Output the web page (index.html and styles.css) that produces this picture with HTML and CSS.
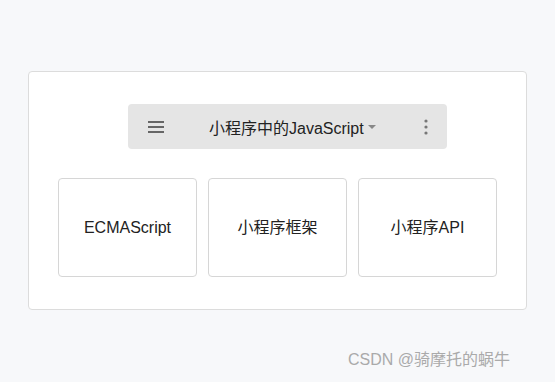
FILE: index.html
```html
<!DOCTYPE html>
<html lang="zh">
<head>
  <meta charset="UTF-8" />
  <meta name="viewport" content="width=device-width, initial-scale=1" />
  <title>小程序中的JavaScript</title>
  <link rel="stylesheet" href="styles.css">
</head>
<body>
  <div class="panel">
    <div class="toolbar">
      <span class="tb-icon">
        <svg width="18" height="14" viewBox="0 0 18 14"><rect x="1" y="1" width="16" height="2" fill="#666"/><rect x="1" y="6" width="16" height="2" fill="#666"/><rect x="1" y="11" width="16" height="2" fill="#666"/></svg>
      </span>
      <span class="tb-title">小程序中的JavaScript<span class="caret"></span></span>
      <span class="tb-icon tb-more">
        <svg width="6" height="18" viewBox="0 0 6 18"><circle cx="3" cy="3" r="1.6" fill="#777"/><circle cx="3" cy="9" r="1.6" fill="#777"/><circle cx="3" cy="15" r="1.6" fill="#777"/></svg>
      </span>
    </div>
    <div class="grid">
      <div class="cell">ECMAScript</div>
      <div class="cell">小程序框架</div>
      <div class="cell">小程序API</div>
    </div>
  </div>
  <div class="mark">CSDN @骑摩托的蜗牛</div>
</body>
</html>
```

FILE: styles.css
```css
body {
  margin: 0;
  padding: 71px 0 0 28px;
  background: #f7f8fa;
  font-family: "Liberation Sans", "Noto Sans CJK SC", sans-serif;
  color: #222;
}

.panel {
  width: 497px;
  height: 237px;
  background: #fff;
  border: 1px solid #dcdcdc;
  border-radius: 4px;
}

.toolbar {
  margin: 32px 0 0 99px;
  width: 319px;
  height: 45px;
  background: #e5e5e5;
  border-radius: 4px;
  display: flex;
  align-items: center;
  padding: 0 18px 0 19px;
  box-sizing: border-box;
}

.tb-icon {
  display: flex;
  align-items: center;
}

.tb-more {
  margin-left: auto;
}

.tb-title {
  font-size: 16px;
  color: #222;
  margin-left: 44px;
  display: flex;
  align-items: center;
}

.caret {
  width: 0;
  height: 0;
  border-left: 4px solid transparent;
  border-right: 4px solid transparent;
  border-top: 4px solid #888;
  margin-left: 4px;
  margin-top: 1px;
}

.grid {
  display: flex;
  gap: 11px;
  margin: 29px 0 0 29px;
}

.cell {
  width: 137px;
  height: 97px;
  border: 1px solid #d6d6d6;
  border-radius: 4px;
  display: flex;
  align-items: center;
  justify-content: center;
  font-size: 16px;
  line-height: 22px;
  color: #222;
}

.mark {
  margin: 40px 0 0 320px;
  font-size: 16px;
  line-height: 20px;
  color: #aaa;
}
```
